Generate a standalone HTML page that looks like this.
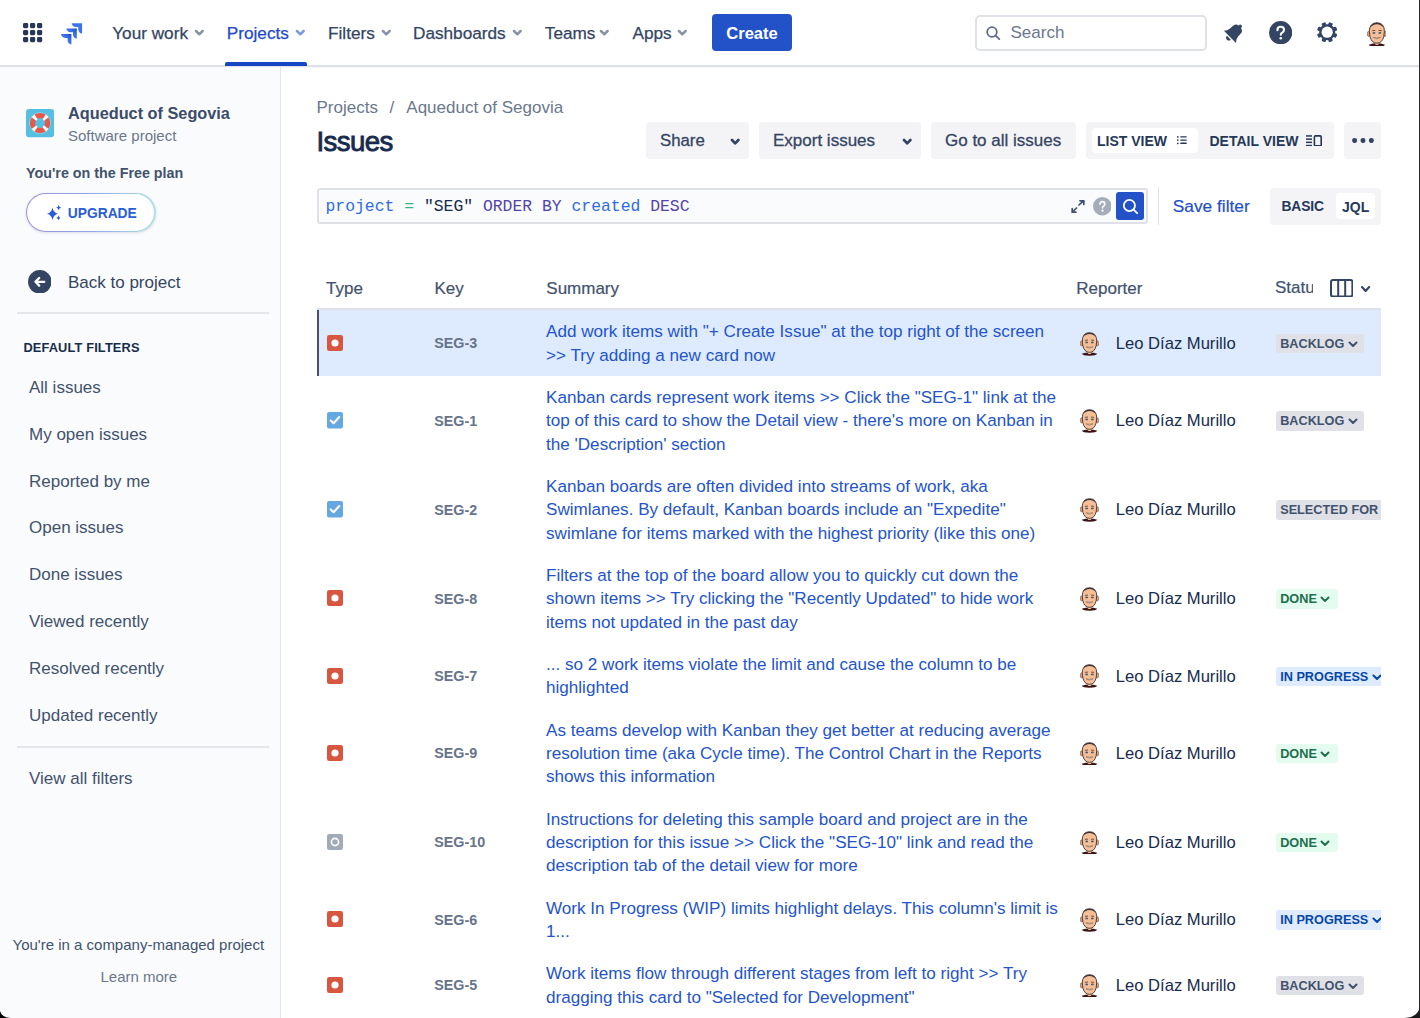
<!DOCTYPE html>
<html><head><meta charset="utf-8"><title>Issues - Jira</title>
<style>
html,body{margin:0;padding:0;}
body{width:1420px;height:1018px;position:relative;overflow:hidden;background:#fff;font-family:"Liberation Sans",sans-serif;}
.a{position:absolute;white-space:nowrap;}
.m{font-family:"Liberation Mono",monospace;}
.sum{position:absolute;left:546px;width:530px;font-size:17.1px;line-height:23.4px;color:#2354CC;white-space:nowrap;}
.loz{position:absolute;left:1275.5px;height:19.5px;border-radius:3px;font-weight:700;font-size:12.7px;line-height:21px;padding-left:4.7px;overflow:hidden;white-space:nowrap;}
</style></head><body>

<div class="a" style="left:0.00px;top:0.00px;width:1420.00px;height:65.40px;background:#fff;"></div>
<div class="a" style="left:0.00px;top:65.40px;width:1420.00px;height:1.40px;background:#DFE1E6;"></div>
<div class="a" style="left:0.00px;top:66.80px;width:1420.00px;height:1.70px;background:linear-gradient(#eef0f3,rgba(255,255,255,0));"></div>
<svg class="a" style="left:23.20px;top:23.00px;" width="19.5" height="19.5" viewBox="0 0 19.5 19.5"><rect x="0" y="0" width="5.2" height="5.2" rx="1.4" fill="#253858"/><rect x="0" y="7" width="5.2" height="5.2" rx="1.4" fill="#253858"/><rect x="0" y="14" width="5.2" height="5.2" rx="1.4" fill="#253858"/><rect x="7" y="0" width="5.2" height="5.2" rx="1.4" fill="#253858"/><rect x="7" y="7" width="5.2" height="5.2" rx="1.4" fill="#253858"/><rect x="7" y="14" width="5.2" height="5.2" rx="1.4" fill="#253858"/><rect x="14" y="0" width="5.2" height="5.2" rx="1.4" fill="#253858"/><rect x="14" y="7" width="5.2" height="5.2" rx="1.4" fill="#253858"/><rect x="14" y="14" width="5.2" height="5.2" rx="1.4" fill="#253858"/></svg>
<svg class="a" style="left:61.30px;top:22.80px;" width="21.4" height="21.8" viewBox="0 0 21.4 21.8"><defs><linearGradient id="jg" x1="1" y1="0" x2="0.3" y2="0.7"><stop offset="0" stop-color="#1848C2"/><stop offset="0.55" stop-color="#3C72E8"/></linearGradient></defs><path transform="translate(10.7 0.2)" d="M0 0 L10.4 0 L10.4 10.4 C8.2 10.1 6.6 8.5 6.6 6.2 L6.6 3.9 L4.2 3.9 C2 3.9 0.3 2.3 0 0 Z" fill="#3E74EA"/><path transform="translate(5.4 5.4)" d="M0 0 L10.4 0 L10.4 10.4 C8.2 10.1 6.6 8.5 6.6 6.2 L6.6 3.9 L4.2 3.9 C2 3.9 0.3 2.3 0 0 Z" fill="url(#jg)"/><path transform="translate(0 11.1)" d="M0 0 L10.4 0 L10.4 10.4 C8.2 10.1 6.6 8.5 6.6 6.2 L6.6 3.9 L4.2 3.9 C2 3.9 0.3 2.3 0 0 Z" fill="url(#jg)"/></svg>
<div class="a " style="left:112.20px;top:23.22px;font-size:17.2px;line-height:20.64px;color:#344563;font-weight:400;-webkit-text-stroke:0.25px #344563;">Your work</div>
<svg class="a" style="left:193.95px;top:28.95px;" width="10.6" height="7.3" viewBox="0 0 10.6 7.3"><path d="M2 2 L5.3 5.3 L8.6 2" fill="none" stroke="#8993A4" stroke-width="2.5" stroke-linecap="round" stroke-linejoin="round"/></svg>
<div class="a " style="left:226.80px;top:23.22px;font-size:17.2px;line-height:20.64px;color:#1D4ACB;font-weight:400;-webkit-text-stroke:0.25px #1D4ACB;">Projects</div>
<svg class="a" style="left:295.35px;top:28.95px;" width="10.6" height="7.3" viewBox="0 0 10.6 7.3"><path d="M2 2 L5.3 5.3 L8.6 2" fill="none" stroke="#7A9BE0" stroke-width="2.5" stroke-linecap="round" stroke-linejoin="round"/></svg>
<div class="a " style="left:328.00px;top:23.22px;font-size:17.2px;line-height:20.64px;color:#344563;font-weight:400;-webkit-text-stroke:0.25px #344563;">Filters</div>
<svg class="a" style="left:381.30px;top:28.95px;" width="10.6" height="7.3" viewBox="0 0 10.6 7.3"><path d="M2 2 L5.3 5.3 L8.6 2" fill="none" stroke="#8993A4" stroke-width="2.5" stroke-linecap="round" stroke-linejoin="round"/></svg>
<div class="a " style="left:413.00px;top:23.22px;font-size:17.2px;line-height:20.64px;color:#344563;font-weight:400;-webkit-text-stroke:0.25px #344563;">Dashboards</div>
<svg class="a" style="left:512.00px;top:28.95px;" width="10.6" height="7.3" viewBox="0 0 10.6 7.3"><path d="M2 2 L5.3 5.3 L8.6 2" fill="none" stroke="#8993A4" stroke-width="2.5" stroke-linecap="round" stroke-linejoin="round"/></svg>
<div class="a " style="left:544.80px;top:23.22px;font-size:17.2px;line-height:20.64px;color:#344563;font-weight:400;-webkit-text-stroke:0.25px #344563;">Teams</div>
<svg class="a" style="left:599.35px;top:28.95px;" width="10.6" height="7.3" viewBox="0 0 10.6 7.3"><path d="M2 2 L5.3 5.3 L8.6 2" fill="none" stroke="#8993A4" stroke-width="2.5" stroke-linecap="round" stroke-linejoin="round"/></svg>
<div class="a " style="left:632.50px;top:23.22px;font-size:17.2px;line-height:20.64px;color:#344563;font-weight:400;-webkit-text-stroke:0.25px #344563;">Apps</div>
<svg class="a" style="left:676.85px;top:28.95px;" width="10.6" height="7.3" viewBox="0 0 10.6 7.3"><path d="M2 2 L5.3 5.3 L8.6 2" fill="none" stroke="#8993A4" stroke-width="2.5" stroke-linecap="round" stroke-linejoin="round"/></svg>
<div class="a" style="left:225.00px;top:62.00px;width:82.40px;height:3.60px;background:#1546C4;border-radius:2px 2px 0 0;"></div>
<div class="a" style="left:712.30px;top:13.90px;width:80.00px;height:37.50px;background:#2352C8;border-radius:4px;"></div>
<div class="a " style="left:726.30px;top:23.88px;font-size:16.5px;line-height:19.8px;color:#fff;font-weight:700;">Create</div>
<div class="a" style="left:975.00px;top:15.00px;width:232.20px;height:35.60px;border:2px solid #DFE1E6;border-radius:5px;box-sizing:border-box;background:#fff;"></div>
<svg class="a" style="left:985.50px;top:26.30px;" width="15" height="14" viewBox="0 0 15 14"><circle cx="6" cy="6" r="4.8" fill="none" stroke="#5E6C84" stroke-width="1.8"/><path d="M9.6 9.6 L13.3 13.2" stroke="#5E6C84" stroke-width="1.8" stroke-linecap="round"/></svg>
<div class="a " style="left:1010.50px;top:23.41px;font-size:17px;line-height:20.4px;color:#6B778C;font-weight:400;">Search</div>
<svg class="a" style="left:1223.20px;top:20.90px;" width="22.6" height="22.6" viewBox="0 0 20 20"><g transform="rotate(45 10 10)"><path d="M2.3 15.6 Q4.9 13.6 5 10 L5 7.6 Q5 2.9 10 2.9 Q15 2.9 15 7.6 L15 10 Q15.1 13.6 17.7 15.6 Z" fill="#344563"/><rect x="8.6" y="1.2" width="2.8" height="2.4" rx="0.8" fill="#344563"/><path d="M7.6 16.8 A2.4 2.4 0 0 0 12.4 16.8 Z" fill="#344563"/></g></svg>
<svg class="a" style="left:1268.90px;top:21.00px;" width="23.3" height="23.3" viewBox="0 0 23.3 23.3"><circle cx="11.65" cy="11.65" r="11.65" fill="#344563"/><path d="M8.4 9.2 Q8.4 5.7 11.7 5.7 Q15 5.7 15 8.7 Q15 10.6 13.2 11.6 Q11.8 12.3 11.8 13.8" fill="none" stroke="#fff" stroke-width="2.1" stroke-linecap="round"/><circle cx="11.8" cy="17.3" r="1.3" fill="#fff"/></svg>
<svg class="a" style="left:1316.90px;top:22.20px;" width="20.4" height="20.4" viewBox="0 0 20.4 20.4"><circle cx="10.2" cy="10.2" r="8" fill="#344563"/><rect x="8.1" y="0" width="4.2" height="5" rx="1.1" fill="#344563" transform="rotate(22.5 10.2 10.2)"/><rect x="8.1" y="0" width="4.2" height="5" rx="1.1" fill="#344563" transform="rotate(67.5 10.2 10.2)"/><rect x="8.1" y="0" width="4.2" height="5" rx="1.1" fill="#344563" transform="rotate(112.5 10.2 10.2)"/><rect x="8.1" y="0" width="4.2" height="5" rx="1.1" fill="#344563" transform="rotate(157.5 10.2 10.2)"/><rect x="8.1" y="0" width="4.2" height="5" rx="1.1" fill="#344563" transform="rotate(202.5 10.2 10.2)"/><rect x="8.1" y="0" width="4.2" height="5" rx="1.1" fill="#344563" transform="rotate(247.5 10.2 10.2)"/><rect x="8.1" y="0" width="4.2" height="5" rx="1.1" fill="#344563" transform="rotate(292.5 10.2 10.2)"/><rect x="8.1" y="0" width="4.2" height="5" rx="1.1" fill="#344563" transform="rotate(337.5 10.2 10.2)"/><circle cx="10.2" cy="10.2" r="5.6" fill="#fff"/></svg>
<svg class="a" style="left:1366.50px;top:21.60px;" width="19.8" height="24.75" viewBox="0 0 20 25"><path d="M1.8 23 Q10 20 18.2 23 Q17 25 10 25 Q3 25 1.8 23 Z" fill="#3b1216"/><path d="M8.2 19.5 L11.8 19.5 L11.8 22.8 Q10 23.6 8.2 22.8 Z" fill="#f1bf98"/><ellipse cx="1.9" cy="12" rx="1.7" ry="2.7" fill="#d9a27e" stroke="#5a3b2e" stroke-width="0.5"/><ellipse cx="18.1" cy="12" rx="1.7" ry="2.7" fill="#d9a27e" stroke="#5a3b2e" stroke-width="0.5"/><path d="M2.4 9.5 Q2.4 0.8 10 0.8 Q17.6 0.8 17.6 9.5 L17 14.5 Q15.4 21.4 10 21.4 Q4.6 21.4 3 14.5 Z" fill="#F4BF96" stroke="#3a2a2a" stroke-width="0.9"/><path d="M3.5 5.5 Q5 0.8 10 0.8 Q15 0.8 16.5 5.5 Q14.5 2.4 10 2.2 Q5.5 2.4 3.5 5.5 Z" fill="#3a3036"/><path d="M5.2 8.8 L8.4 8.5 M11.6 8.5 L14.8 8.8" stroke="#6a4a3a" stroke-width="1"/><ellipse cx="7" cy="11" rx="1.5" ry="0.95" fill="#4a5a6a"/><ellipse cx="13" cy="11" rx="1.5" ry="0.95" fill="#4a5a6a"/><path d="M6.4 15.6 Q10 18.4 13.6 15.6 Q10 16.6 6.4 15.6 Z" fill="#e8e8e8" stroke="#6a4a3a" stroke-width="0.5"/></svg>
<div class="a" style="left:0.00px;top:67.00px;width:280.00px;height:951.00px;background:#FAFBFC;"></div>
<div class="a" style="left:280.00px;top:67.00px;width:1.20px;height:951.00px;background:#E4E6EA;"></div>
<svg class="a" style="left:25.90px;top:109.40px;" width="28.2" height="28.2" viewBox="0 0 28.2 28.2"><rect width="28.2" height="28.2" rx="3" fill="#56BFE1"/><circle cx="14.1" cy="14.1" r="10.4" fill="none" stroke="#9fdcef" stroke-width="0.8"/><circle cx="14.1" cy="14.1" r="7.6" fill="none" stroke="#E8584A" stroke-width="5.2"/><path transform="rotate(45 14.1 14.1)" d="M12.2 4 L16 4 L15.2 9.6 L13 9.6 Z" fill="#fff"/><path transform="rotate(135 14.1 14.1)" d="M12.2 4 L16 4 L15.2 9.6 L13 9.6 Z" fill="#fff"/><path transform="rotate(225 14.1 14.1)" d="M12.2 4 L16 4 L15.2 9.6 L13 9.6 Z" fill="#fff"/><path transform="rotate(315 14.1 14.1)" d="M12.2 4 L16 4 L15.2 9.6 L13 9.6 Z" fill="#fff"/></svg>
<div class="a " style="left:68.00px;top:104.27px;font-size:16.3px;line-height:19.56px;color:#3B4B69;font-weight:700;">Aqueduct of Segovia</div>
<div class="a " style="left:68.00px;top:127.40px;font-size:15px;line-height:18.0px;color:#6B778C;font-weight:400;">Software project</div>
<div class="a " style="left:26.00px;top:165.47px;font-size:14.3px;line-height:17.16px;color:#42526E;font-weight:700;">You're on the Free plan</div>
<div class="a" style="left:25.90px;top:193.20px;width:129.70px;height:38.80px;border-radius:20px;padding:1.2px;box-sizing:border-box;background:linear-gradient(90deg,#9A8EE0,#8FAEEA 55%,#B0E0E6);box-shadow:0 1px 3px rgba(9,30,66,0.13);"><div style="width:100%;height:100%;background:#fff;border-radius:19px;"></div></div>
<svg class="a" style="left:45.50px;top:204.50px;" width="16.5" height="15.5" viewBox="0 0 16.5 15.5"><path d="M6.5 2.5 Q7.3 7.6 12 8.8 Q7.3 10 6.5 15 Q5.7 10 1 8.8 Q5.7 7.6 6.5 2.5 Z" fill="#2A5DD6"/><path d="M12.7 0 Q13 2.3 15.2 2.7 Q13 3.1 12.7 5.3 Q12.4 3.1 10.2 2.7 Q12.4 2.3 12.7 0Z" fill="#2A5DD6"/><path d="M12.5 10.5 Q12.8 12.5 14.6 12.9 Q12.8 13.3 12.5 15.3 Q12.2 13.3 10.4 12.9 Q12.2 12.5 12.5 10.5Z" fill="#2A5DD6"/></svg>
<div class="a " style="left:67.80px;top:205.74px;font-size:13.8px;line-height:16.56px;color:#2A5DD6;font-weight:700;">UPGRADE</div>
<svg class="a" style="left:27.80px;top:269.80px;" width="23.6" height="23.6" viewBox="0 0 23.6 23.6"><circle cx="11.8" cy="11.8" r="11.8" fill="#344563"/><path d="M16.3 11.8 L7.6 11.8 M11.2 8 L7.4 11.8 L11.2 15.6" fill="none" stroke="#fff" stroke-width="2.3" stroke-linecap="round" stroke-linejoin="round"/></svg>
<div class="a " style="left:68.00px;top:272.71px;font-size:17px;line-height:20.4px;color:#344563;font-weight:400;">Back to project</div>
<div class="a" style="left:16.50px;top:312.30px;width:252.80px;height:2.00px;background:#E4E6EA;"></div>
<div class="a " style="left:23.40px;top:340.18px;font-size:12.8px;line-height:15.36px;color:#172B4D;font-weight:700;letter-spacing:0.15px;">DEFAULT FILTERS</div>
<div class="a " style="left:29.00px;top:377.81px;font-size:17px;line-height:20.4px;color:#42526E;font-weight:400;">All issues</div>
<div class="a " style="left:29.00px;top:425.01px;font-size:17px;line-height:20.4px;color:#42526E;font-weight:400;">My open issues</div>
<div class="a " style="left:29.00px;top:471.71px;font-size:17px;line-height:20.4px;color:#42526E;font-weight:400;">Reported by me</div>
<div class="a " style="left:29.00px;top:518.11px;font-size:17px;line-height:20.4px;color:#42526E;font-weight:400;">Open issues</div>
<div class="a " style="left:29.00px;top:565.41px;font-size:17px;line-height:20.4px;color:#42526E;font-weight:400;">Done issues</div>
<div class="a " style="left:29.00px;top:611.91px;font-size:17px;line-height:20.4px;color:#42526E;font-weight:400;">Viewed recently</div>
<div class="a " style="left:29.00px;top:659.11px;font-size:17px;line-height:20.4px;color:#42526E;font-weight:400;">Resolved recently</div>
<div class="a " style="left:29.00px;top:706.21px;font-size:17px;line-height:20.4px;color:#42526E;font-weight:400;">Updated recently</div>
<div class="a" style="left:16.50px;top:746.00px;width:252.80px;height:2.00px;background:#E4E6EA;"></div>
<div class="a " style="left:29.00px;top:768.71px;font-size:17px;line-height:20.4px;color:#42526E;font-weight:400;">View all filters</div>
<div class="a " style="left:12.50px;top:935.90px;font-size:15px;line-height:18.0px;color:#42526E;font-weight:400;">You're in a company-managed project</div>
<div class="a " style="left:100.50px;top:967.60px;font-size:15px;line-height:18.0px;color:#6B778C;font-weight:400;">Learn more</div>
<div class="a " style="left:316.50px;top:98.41px;font-size:17px;line-height:20.4px;color:#6B778C;font-weight:400;">Projects</div>
<div class="a " style="left:389.50px;top:98.41px;font-size:17px;line-height:20.4px;color:#6B778C;font-weight:400;">/</div>
<div class="a " style="left:406.30px;top:98.41px;font-size:17px;line-height:20.4px;color:#6B778C;font-weight:400;">Aqueduct of Segovia</div>
<div class="a " style="left:316.40px;top:125.28px;font-size:27.6px;line-height:33.12px;color:#172B4D;font-weight:400;letter-spacing:-0.55px;-webkit-text-stroke:0.85px #172B4D;">Issues</div>
<div class="a" style="left:646.30px;top:122.00px;width:102.50px;height:36.70px;background:#F4F4F6;border-radius:4px;"></div>
<div class="a " style="left:660.00px;top:131.00px;font-size:16.8px;line-height:20.16px;color:#344563;font-weight:400;-webkit-text-stroke:0.3px #344563;">Share</div>
<svg class="a" style="left:730.20px;top:137.60px;" width="10.4" height="7.4" viewBox="0 0 10.4 7.4"><path d="M2 2 L5.2 5.4 L8.4 2" fill="none" stroke="#344563" stroke-width="2.7" stroke-linecap="round" stroke-linejoin="round"/></svg>
<div class="a" style="left:759.00px;top:122.00px;width:162.00px;height:36.70px;background:#F4F4F6;border-radius:4px;"></div>
<div class="a " style="left:773.00px;top:130.81px;font-size:17px;line-height:20.4px;color:#344563;font-weight:400;-webkit-text-stroke:0.3px #344563;">Export issues</div>
<svg class="a" style="left:902.30px;top:137.60px;" width="10.4" height="7.4" viewBox="0 0 10.4 7.4"><path d="M2 2 L5.2 5.4 L8.4 2" fill="none" stroke="#344563" stroke-width="2.7" stroke-linecap="round" stroke-linejoin="round"/></svg>
<div class="a" style="left:931.20px;top:122.00px;width:144.80px;height:36.70px;background:#F4F4F6;border-radius:4px;"></div>
<div class="a " style="left:945.00px;top:130.81px;font-size:17px;line-height:20.4px;color:#344563;font-weight:400;-webkit-text-stroke:0.3px #344563;">Go to all issues</div>
<div class="a" style="left:1085.90px;top:121.90px;width:248.30px;height:36.90px;background:#F4F4F6;border-radius:4px;"></div>
<div class="a" style="left:1091.60px;top:127.70px;width:106.20px;height:25.80px;background:#fff;border-radius:4px;"></div>
<div class="a " style="left:1097.00px;top:132.95px;font-size:14px;line-height:16.8px;color:#253858;font-weight:700;">LIST VIEW</div>
<svg class="a" style="left:1177.30px;top:136.40px;" width="10" height="8.2" viewBox="0 0 10 8.2"><g fill="#253858"><circle cx="0.8" cy="0.9" r="0.85"/><circle cx="0.8" cy="4.1" r="0.85"/><circle cx="0.8" cy="7.3" r="0.85"/><rect x="3.2" y="0.2" width="6.6" height="1.4" rx="0.5"/><rect x="3.2" y="3.4" width="6.6" height="1.4" rx="0.5"/><rect x="3.2" y="6.6" width="6.6" height="1.4" rx="0.5"/></g></svg>
<div class="a " style="left:1209.50px;top:132.75px;font-size:14px;line-height:16.8px;color:#253858;font-weight:700;">DETAIL VIEW</div>
<svg class="a" style="left:1305.50px;top:134.80px;" width="16" height="11.5" viewBox="0 0 16 11.5"><g fill="#253858"><rect x="0" y="0.2" width="6" height="1.5"/><rect x="0" y="3.4" width="6" height="1.5"/><rect x="0" y="6.6" width="6" height="1.5"/><rect x="0" y="9.8" width="6" height="1.5"/></g><rect x="8.4" y="0.9" width="6.8" height="9.8" rx="1" fill="none" stroke="#253858" stroke-width="1.6"/></svg>
<div class="a" style="left:1343.90px;top:122.00px;width:37.20px;height:36.80px;background:#F4F4F6;border-radius:4px;"></div>
<svg class="a" style="left:1351.50px;top:138.00px;" width="22" height="5.2" viewBox="0 0 22 5.2"><g fill="#344563"><circle cx="2.6" cy="2.6" r="2.5"/><circle cx="11" cy="2.6" r="2.5"/><circle cx="19.4" cy="2.6" r="2.5"/></g></svg>
<div class="a" style="left:316.80px;top:188.10px;width:831.50px;height:36.10px;border:2px solid #DFE1E6;border-radius:3px;box-sizing:border-box;background:#FAFBFC;"></div>
<div class="a m" style="left:325.50px;top:197.28px;font-size:16.4px;line-height:19.68px;color:#172B4D;font-weight:400;"><span style="color:#2E6BE6">project</span> <span style="color:#36B37E">=</span> <span style="color:#172B4D">"SEG"</span> <span style="color:#5243AA">ORDER</span> <span style="color:#5243AA">BY</span> <span style="color:#2E6BE6">created</span> <span style="color:#5243AA">DESC</span></div>
<svg class="a" style="left:1071.30px;top:199.50px;" width="14" height="13" viewBox="0 0 14 13"><g fill="none" stroke="#42526E" stroke-width="1.7" stroke-linecap="round"><path d="M8 5 L12.5 0.8 M9 0.8 L12.8 0.8 L12.8 4.4"/><path d="M5.5 8 L1.2 12.2 M1.2 8.5 L1.2 12.2 L4.9 12.2"/></g></svg>
<svg class="a" style="left:1092.50px;top:197.00px;" width="18.6" height="18.6" viewBox="0 0 18.6 18.6"><circle cx="9.3" cy="9.3" r="9.3" fill="#A5ADBA"/><path d="M7 7.3 Q7 4.6 9.4 4.6 Q11.8 4.6 11.8 7 Q11.8 8.4 10.5 9.1 Q9.5 9.7 9.5 11" fill="none" stroke="#fff" stroke-width="1.6" stroke-linecap="round"/><circle cx="9.5" cy="13.7" r="1.15" fill="#fff"/></svg>
<div class="a" style="left:1116.20px;top:192.00px;width:27.50px;height:28.00px;background:#2352C8;border-radius:3px;"></div>
<svg class="a" style="left:1121.50px;top:197.80px;" width="17" height="17" viewBox="0 0 17 17"><circle cx="7.4" cy="7.5" r="5.6" fill="none" stroke="#fff" stroke-width="1.8"/><path d="M11.5 11.6 L15.2 15.1" stroke="#fff" stroke-width="1.8" stroke-linecap="round"/></svg>
<div class="a" style="left:1158.30px;top:187.40px;width:1.20px;height:37.20px;background:#DFE1E6;"></div>
<div class="a " style="left:1172.80px;top:196.43px;font-size:17.3px;line-height:20.76px;color:#1D4FCC;font-weight:400;-webkit-text-stroke:0.2px #1D4FCC;">Save filter</div>
<div class="a" style="left:1269.60px;top:187.70px;width:111.60px;height:36.90px;background:#F4F4F6;border-radius:4px;"></div>
<div class="a " style="left:1281.50px;top:199.14px;font-size:13.8px;line-height:16.56px;color:#253858;font-weight:700;letter-spacing:-0.1px;">BASIC</div>
<div class="a" style="left:1336.00px;top:193.20px;width:38.90px;height:25.60px;background:#fff;border-radius:4px;"></div>
<div class="a " style="left:1342.00px;top:198.95px;font-size:14px;line-height:16.8px;color:#253858;font-weight:700;">JQL</div>
<div class="a " style="left:326.00px;top:278.91px;font-size:17px;line-height:20.4px;color:#42526E;font-weight:400;-webkit-text-stroke:0.2px #42526E;">Type</div>
<div class="a " style="left:434.50px;top:278.91px;font-size:17px;line-height:20.4px;color:#42526E;font-weight:400;-webkit-text-stroke:0.2px #42526E;">Key</div>
<div class="a " style="left:546.30px;top:278.91px;font-size:17px;line-height:20.4px;color:#42526E;font-weight:400;-webkit-text-stroke:0.2px #42526E;">Summary</div>
<div class="a " style="left:1076.30px;top:278.91px;font-size:17px;line-height:20.4px;color:#42526E;font-weight:400;-webkit-text-stroke:0.2px #42526E;">Reporter</div>
<div class="a" style="left:1275px;top:277.4px;width:38px;height:22px;overflow:hidden;"><div class="a" style="left:0;top:0;font-size:17px;line-height:22px;color:#42526E;-webkit-text-stroke:0.2px #42526E;">Status</div></div>
<svg class="a" style="left:1329.80px;top:278.90px;" width="23.4" height="18.6" viewBox="0 0 23.4 18.6"><rect x="1" y="1" width="21.4" height="16.6" rx="2" fill="none" stroke="#344563" stroke-width="2"/><path d="M8.2 1 L8.2 17.6 M15.2 1 L15.2 17.6" stroke="#344563" stroke-width="2"/></svg>
<svg class="a" style="left:1359.60px;top:284.60px;" width="11.2" height="8" viewBox="0 0 11.2 8"><path d="M2 2 L5.6 6 L9.2 2" fill="none" stroke="#344563" stroke-width="2.1" stroke-linecap="round" stroke-linejoin="round"/></svg>
<div class="a" style="left:316.80px;top:308.00px;width:1064.40px;height:2.30px;background:#DFE1E6;"></div>
<div class="a" style="left:316.50px;top:310.30px;width:1064.70px;height:65.60px;background:#DEEBFF;"></div>
<div class="a" style="left:316.50px;top:310.30px;width:2.50px;height:65.60px;background:#42526E;"></div>
<svg class="a" style="left:327.10px;top:335.00px;" width="16" height="16" viewBox="0 0 16 16"><rect width="16" height="16" rx="2.2" fill="#D8553F"/><circle cx="8" cy="8" r="3.6" fill="#fff"/></svg>
<div class="a " style="left:434.30px;top:335.47px;font-size:14.3px;line-height:17.16px;color:#66738A;font-weight:700;">SEG-3</div>
<div class="sum" style="top:320.30px;">Add work items with "+ Create Issue" at the top right of the screen<br>&gt;&gt; Try adding a new card now</div>
<svg class="a" style="left:1080.20px;top:331.80px;" width="19.0" height="23.75" viewBox="0 0 20 25"><path d="M1.8 23 Q10 20 18.2 23 Q17 25 10 25 Q3 25 1.8 23 Z" fill="#3b1216"/><path d="M8.2 19.5 L11.8 19.5 L11.8 22.8 Q10 23.6 8.2 22.8 Z" fill="#f1bf98"/><ellipse cx="1.9" cy="12" rx="1.7" ry="2.7" fill="#d9a27e" stroke="#5a3b2e" stroke-width="0.5"/><ellipse cx="18.1" cy="12" rx="1.7" ry="2.7" fill="#d9a27e" stroke="#5a3b2e" stroke-width="0.5"/><path d="M2.4 9.5 Q2.4 0.8 10 0.8 Q17.6 0.8 17.6 9.5 L17 14.5 Q15.4 21.4 10 21.4 Q4.6 21.4 3 14.5 Z" fill="#F4BF96" stroke="#3a2a2a" stroke-width="0.9"/><path d="M3.5 5.5 Q5 0.8 10 0.8 Q15 0.8 16.5 5.5 Q14.5 2.4 10 2.2 Q5.5 2.4 3.5 5.5 Z" fill="#3a3036"/><path d="M5.2 8.8 L8.4 8.5 M11.6 8.5 L14.8 8.8" stroke="#6a4a3a" stroke-width="1"/><ellipse cx="7" cy="11" rx="1.5" ry="0.95" fill="#4a5a6a"/><ellipse cx="13" cy="11" rx="1.5" ry="0.95" fill="#4a5a6a"/><path d="M6.4 15.6 Q10 18.4 13.6 15.6 Q10 16.6 6.4 15.6 Z" fill="#e8e8e8" stroke="#6a4a3a" stroke-width="0.5"/></svg>
<div class="a " style="left:1115.80px;top:334.09px;font-size:16.6px;line-height:19.92px;color:#172B4D;font-weight:400;">Leo Díaz Murillo</div>
<div class="loz" style="top:333.90px;width:84px;background:#DFE1E6;color:#42526E;">BACKLOG<svg width="10" height="7" viewBox="0 0 10 7" style="margin-left:3.5px;vertical-align:0px"><path d="M1.5 1.5 L5 5 L8.5 1.5" fill="none" stroke="currentColor" stroke-width="2" stroke-linecap="round" stroke-linejoin="round"/></svg></div>
<svg class="a" style="left:327.10px;top:412.30px;" width="16" height="16.4" viewBox="0 0 16 16.4"><rect width="16" height="16.4" rx="2.2" fill="#64A8E2"/><path d="M3.7 8.4 L6.6 11.2 L12.3 5" fill="none" stroke="#fff" stroke-width="2.1" stroke-linecap="round" stroke-linejoin="round"/></svg>
<div class="a " style="left:434.30px;top:412.77px;font-size:14.3px;line-height:17.16px;color:#66738A;font-weight:700;">SEG-1</div>
<div class="sum" style="top:385.90px;">Kanban cards represent work items &gt;&gt; Click the "SEG-1" link at the<br>top of this card to show the Detail view - there's more on Kanban in<br>the 'Description' section</div>
<svg class="a" style="left:1080.20px;top:409.10px;" width="19.0" height="23.75" viewBox="0 0 20 25"><path d="M1.8 23 Q10 20 18.2 23 Q17 25 10 25 Q3 25 1.8 23 Z" fill="#3b1216"/><path d="M8.2 19.5 L11.8 19.5 L11.8 22.8 Q10 23.6 8.2 22.8 Z" fill="#f1bf98"/><ellipse cx="1.9" cy="12" rx="1.7" ry="2.7" fill="#d9a27e" stroke="#5a3b2e" stroke-width="0.5"/><ellipse cx="18.1" cy="12" rx="1.7" ry="2.7" fill="#d9a27e" stroke="#5a3b2e" stroke-width="0.5"/><path d="M2.4 9.5 Q2.4 0.8 10 0.8 Q17.6 0.8 17.6 9.5 L17 14.5 Q15.4 21.4 10 21.4 Q4.6 21.4 3 14.5 Z" fill="#F4BF96" stroke="#3a2a2a" stroke-width="0.9"/><path d="M3.5 5.5 Q5 0.8 10 0.8 Q15 0.8 16.5 5.5 Q14.5 2.4 10 2.2 Q5.5 2.4 3.5 5.5 Z" fill="#3a3036"/><path d="M5.2 8.8 L8.4 8.5 M11.6 8.5 L14.8 8.8" stroke="#6a4a3a" stroke-width="1"/><ellipse cx="7" cy="11" rx="1.5" ry="0.95" fill="#4a5a6a"/><ellipse cx="13" cy="11" rx="1.5" ry="0.95" fill="#4a5a6a"/><path d="M6.4 15.6 Q10 18.4 13.6 15.6 Q10 16.6 6.4 15.6 Z" fill="#e8e8e8" stroke="#6a4a3a" stroke-width="0.5"/></svg>
<div class="a " style="left:1115.80px;top:411.39px;font-size:16.6px;line-height:19.92px;color:#172B4D;font-weight:400;">Leo Díaz Murillo</div>
<div class="loz" style="top:411.20px;width:84px;background:#DFE1E6;color:#42526E;">BACKLOG<svg width="10" height="7" viewBox="0 0 10 7" style="margin-left:3.5px;vertical-align:0px"><path d="M1.5 1.5 L5 5 L8.5 1.5" fill="none" stroke="currentColor" stroke-width="2" stroke-linecap="round" stroke-linejoin="round"/></svg></div>
<svg class="a" style="left:327.10px;top:501.30px;" width="16" height="16.4" viewBox="0 0 16 16.4"><rect width="16" height="16.4" rx="2.2" fill="#64A8E2"/><path d="M3.7 8.4 L6.6 11.2 L12.3 5" fill="none" stroke="#fff" stroke-width="2.1" stroke-linecap="round" stroke-linejoin="round"/></svg>
<div class="a " style="left:434.30px;top:501.77px;font-size:14.3px;line-height:17.16px;color:#66738A;font-weight:700;">SEG-2</div>
<div class="sum" style="top:474.90px;">Kanban boards are often divided into streams of work, aka<br>Swimlanes. By default, Kanban boards include an "Expedite"<br>swimlane for items marked with the highest priority (like this one)</div>
<svg class="a" style="left:1080.20px;top:498.10px;" width="19.0" height="23.75" viewBox="0 0 20 25"><path d="M1.8 23 Q10 20 18.2 23 Q17 25 10 25 Q3 25 1.8 23 Z" fill="#3b1216"/><path d="M8.2 19.5 L11.8 19.5 L11.8 22.8 Q10 23.6 8.2 22.8 Z" fill="#f1bf98"/><ellipse cx="1.9" cy="12" rx="1.7" ry="2.7" fill="#d9a27e" stroke="#5a3b2e" stroke-width="0.5"/><ellipse cx="18.1" cy="12" rx="1.7" ry="2.7" fill="#d9a27e" stroke="#5a3b2e" stroke-width="0.5"/><path d="M2.4 9.5 Q2.4 0.8 10 0.8 Q17.6 0.8 17.6 9.5 L17 14.5 Q15.4 21.4 10 21.4 Q4.6 21.4 3 14.5 Z" fill="#F4BF96" stroke="#3a2a2a" stroke-width="0.9"/><path d="M3.5 5.5 Q5 0.8 10 0.8 Q15 0.8 16.5 5.5 Q14.5 2.4 10 2.2 Q5.5 2.4 3.5 5.5 Z" fill="#3a3036"/><path d="M5.2 8.8 L8.4 8.5 M11.6 8.5 L14.8 8.8" stroke="#6a4a3a" stroke-width="1"/><ellipse cx="7" cy="11" rx="1.5" ry="0.95" fill="#4a5a6a"/><ellipse cx="13" cy="11" rx="1.5" ry="0.95" fill="#4a5a6a"/><path d="M6.4 15.6 Q10 18.4 13.6 15.6 Q10 16.6 6.4 15.6 Z" fill="#e8e8e8" stroke="#6a4a3a" stroke-width="0.5"/></svg>
<div class="a " style="left:1115.80px;top:500.39px;font-size:16.6px;line-height:19.92px;color:#172B4D;font-weight:400;">Leo Díaz Murillo</div>
<div class="loz" style="top:500.20px;width:101px;background:#DFE1E6;color:#42526E;border-radius:3px 0 0 3px;">SELECTED FOR DEVELOPMENT</div>
<svg class="a" style="left:327.10px;top:590.30px;" width="16" height="16" viewBox="0 0 16 16"><rect width="16" height="16" rx="2.2" fill="#D8553F"/><circle cx="8" cy="8" r="3.6" fill="#fff"/></svg>
<div class="a " style="left:434.30px;top:590.77px;font-size:14.3px;line-height:17.16px;color:#66738A;font-weight:700;">SEG-8</div>
<div class="sum" style="top:563.90px;">Filters at the top of the board allow you to quickly cut down the<br>shown items &gt;&gt; Try clicking the "Recently Updated" to hide work<br>items not updated in the past day</div>
<svg class="a" style="left:1080.20px;top:587.10px;" width="19.0" height="23.75" viewBox="0 0 20 25"><path d="M1.8 23 Q10 20 18.2 23 Q17 25 10 25 Q3 25 1.8 23 Z" fill="#3b1216"/><path d="M8.2 19.5 L11.8 19.5 L11.8 22.8 Q10 23.6 8.2 22.8 Z" fill="#f1bf98"/><ellipse cx="1.9" cy="12" rx="1.7" ry="2.7" fill="#d9a27e" stroke="#5a3b2e" stroke-width="0.5"/><ellipse cx="18.1" cy="12" rx="1.7" ry="2.7" fill="#d9a27e" stroke="#5a3b2e" stroke-width="0.5"/><path d="M2.4 9.5 Q2.4 0.8 10 0.8 Q17.6 0.8 17.6 9.5 L17 14.5 Q15.4 21.4 10 21.4 Q4.6 21.4 3 14.5 Z" fill="#F4BF96" stroke="#3a2a2a" stroke-width="0.9"/><path d="M3.5 5.5 Q5 0.8 10 0.8 Q15 0.8 16.5 5.5 Q14.5 2.4 10 2.2 Q5.5 2.4 3.5 5.5 Z" fill="#3a3036"/><path d="M5.2 8.8 L8.4 8.5 M11.6 8.5 L14.8 8.8" stroke="#6a4a3a" stroke-width="1"/><ellipse cx="7" cy="11" rx="1.5" ry="0.95" fill="#4a5a6a"/><ellipse cx="13" cy="11" rx="1.5" ry="0.95" fill="#4a5a6a"/><path d="M6.4 15.6 Q10 18.4 13.6 15.6 Q10 16.6 6.4 15.6 Z" fill="#e8e8e8" stroke="#6a4a3a" stroke-width="0.5"/></svg>
<div class="a " style="left:1115.80px;top:589.39px;font-size:16.6px;line-height:19.92px;color:#172B4D;font-weight:400;">Leo Díaz Murillo</div>
<div class="loz" style="top:589.20px;width:58px;background:#E3FCEF;color:#216E4E;">DONE<svg width="10" height="7" viewBox="0 0 10 7" style="margin-left:3.5px;vertical-align:0px"><path d="M1.5 1.5 L5 5 L8.5 1.5" fill="none" stroke="currentColor" stroke-width="2" stroke-linecap="round" stroke-linejoin="round"/></svg></div>
<svg class="a" style="left:327.10px;top:667.60px;" width="16" height="16" viewBox="0 0 16 16"><rect width="16" height="16" rx="2.2" fill="#D8553F"/><circle cx="8" cy="8" r="3.6" fill="#fff"/></svg>
<div class="a " style="left:434.30px;top:668.07px;font-size:14.3px;line-height:17.16px;color:#66738A;font-weight:700;">SEG-7</div>
<div class="sum" style="top:652.90px;">... so 2 work items violate the limit and cause the column to be<br>highlighted</div>
<svg class="a" style="left:1080.20px;top:664.40px;" width="19.0" height="23.75" viewBox="0 0 20 25"><path d="M1.8 23 Q10 20 18.2 23 Q17 25 10 25 Q3 25 1.8 23 Z" fill="#3b1216"/><path d="M8.2 19.5 L11.8 19.5 L11.8 22.8 Q10 23.6 8.2 22.8 Z" fill="#f1bf98"/><ellipse cx="1.9" cy="12" rx="1.7" ry="2.7" fill="#d9a27e" stroke="#5a3b2e" stroke-width="0.5"/><ellipse cx="18.1" cy="12" rx="1.7" ry="2.7" fill="#d9a27e" stroke="#5a3b2e" stroke-width="0.5"/><path d="M2.4 9.5 Q2.4 0.8 10 0.8 Q17.6 0.8 17.6 9.5 L17 14.5 Q15.4 21.4 10 21.4 Q4.6 21.4 3 14.5 Z" fill="#F4BF96" stroke="#3a2a2a" stroke-width="0.9"/><path d="M3.5 5.5 Q5 0.8 10 0.8 Q15 0.8 16.5 5.5 Q14.5 2.4 10 2.2 Q5.5 2.4 3.5 5.5 Z" fill="#3a3036"/><path d="M5.2 8.8 L8.4 8.5 M11.6 8.5 L14.8 8.8" stroke="#6a4a3a" stroke-width="1"/><ellipse cx="7" cy="11" rx="1.5" ry="0.95" fill="#4a5a6a"/><ellipse cx="13" cy="11" rx="1.5" ry="0.95" fill="#4a5a6a"/><path d="M6.4 15.6 Q10 18.4 13.6 15.6 Q10 16.6 6.4 15.6 Z" fill="#e8e8e8" stroke="#6a4a3a" stroke-width="0.5"/></svg>
<div class="a " style="left:1115.80px;top:666.69px;font-size:16.6px;line-height:19.92px;color:#172B4D;font-weight:400;">Leo Díaz Murillo</div>
<div class="loz" style="top:666.50px;width:101px;background:#DEEBFF;color:#0747A6;border-radius:3px 0 0 3px;">IN PROGRESS<svg width="10" height="7" viewBox="0 0 10 7" style="margin-left:3.5px;vertical-align:0px"><path d="M1.5 1.5 L5 5 L8.5 1.5" fill="none" stroke="currentColor" stroke-width="2" stroke-linecap="round" stroke-linejoin="round"/></svg></div>
<svg class="a" style="left:327.10px;top:744.90px;" width="16" height="16" viewBox="0 0 16 16"><rect width="16" height="16" rx="2.2" fill="#D8553F"/><circle cx="8" cy="8" r="3.6" fill="#fff"/></svg>
<div class="a " style="left:434.30px;top:745.37px;font-size:14.3px;line-height:17.16px;color:#66738A;font-weight:700;">SEG-9</div>
<div class="sum" style="top:718.50px;">As teams develop with Kanban they get better at reducing average<br>resolution time (aka Cycle time). The Control Chart in the Reports<br>shows this information</div>
<svg class="a" style="left:1080.20px;top:741.70px;" width="19.0" height="23.75" viewBox="0 0 20 25"><path d="M1.8 23 Q10 20 18.2 23 Q17 25 10 25 Q3 25 1.8 23 Z" fill="#3b1216"/><path d="M8.2 19.5 L11.8 19.5 L11.8 22.8 Q10 23.6 8.2 22.8 Z" fill="#f1bf98"/><ellipse cx="1.9" cy="12" rx="1.7" ry="2.7" fill="#d9a27e" stroke="#5a3b2e" stroke-width="0.5"/><ellipse cx="18.1" cy="12" rx="1.7" ry="2.7" fill="#d9a27e" stroke="#5a3b2e" stroke-width="0.5"/><path d="M2.4 9.5 Q2.4 0.8 10 0.8 Q17.6 0.8 17.6 9.5 L17 14.5 Q15.4 21.4 10 21.4 Q4.6 21.4 3 14.5 Z" fill="#F4BF96" stroke="#3a2a2a" stroke-width="0.9"/><path d="M3.5 5.5 Q5 0.8 10 0.8 Q15 0.8 16.5 5.5 Q14.5 2.4 10 2.2 Q5.5 2.4 3.5 5.5 Z" fill="#3a3036"/><path d="M5.2 8.8 L8.4 8.5 M11.6 8.5 L14.8 8.8" stroke="#6a4a3a" stroke-width="1"/><ellipse cx="7" cy="11" rx="1.5" ry="0.95" fill="#4a5a6a"/><ellipse cx="13" cy="11" rx="1.5" ry="0.95" fill="#4a5a6a"/><path d="M6.4 15.6 Q10 18.4 13.6 15.6 Q10 16.6 6.4 15.6 Z" fill="#e8e8e8" stroke="#6a4a3a" stroke-width="0.5"/></svg>
<div class="a " style="left:1115.80px;top:743.99px;font-size:16.6px;line-height:19.92px;color:#172B4D;font-weight:400;">Leo Díaz Murillo</div>
<div class="loz" style="top:743.80px;width:58px;background:#E3FCEF;color:#216E4E;">DONE<svg width="10" height="7" viewBox="0 0 10 7" style="margin-left:3.5px;vertical-align:0px"><path d="M1.5 1.5 L5 5 L8.5 1.5" fill="none" stroke="currentColor" stroke-width="2" stroke-linecap="round" stroke-linejoin="round"/></svg></div>
<svg class="a" style="left:327.10px;top:833.90px;" width="16" height="16" viewBox="0 0 16 16"><rect width="16" height="16" rx="2.2" fill="#A2A9B7"/><circle cx="8" cy="8" r="3.6" fill="none" stroke="#fff" stroke-width="1.6"/></svg>
<div class="a " style="left:434.30px;top:834.37px;font-size:14.3px;line-height:17.16px;color:#66738A;font-weight:700;">SEG-10</div>
<div class="sum" style="top:807.50px;">Instructions for deleting this sample board and project are in the<br>description for this issue &gt;&gt; Click the "SEG-10" link and read the<br>description tab of the detail view for more</div>
<svg class="a" style="left:1080.20px;top:830.70px;" width="19.0" height="23.75" viewBox="0 0 20 25"><path d="M1.8 23 Q10 20 18.2 23 Q17 25 10 25 Q3 25 1.8 23 Z" fill="#3b1216"/><path d="M8.2 19.5 L11.8 19.5 L11.8 22.8 Q10 23.6 8.2 22.8 Z" fill="#f1bf98"/><ellipse cx="1.9" cy="12" rx="1.7" ry="2.7" fill="#d9a27e" stroke="#5a3b2e" stroke-width="0.5"/><ellipse cx="18.1" cy="12" rx="1.7" ry="2.7" fill="#d9a27e" stroke="#5a3b2e" stroke-width="0.5"/><path d="M2.4 9.5 Q2.4 0.8 10 0.8 Q17.6 0.8 17.6 9.5 L17 14.5 Q15.4 21.4 10 21.4 Q4.6 21.4 3 14.5 Z" fill="#F4BF96" stroke="#3a2a2a" stroke-width="0.9"/><path d="M3.5 5.5 Q5 0.8 10 0.8 Q15 0.8 16.5 5.5 Q14.5 2.4 10 2.2 Q5.5 2.4 3.5 5.5 Z" fill="#3a3036"/><path d="M5.2 8.8 L8.4 8.5 M11.6 8.5 L14.8 8.8" stroke="#6a4a3a" stroke-width="1"/><ellipse cx="7" cy="11" rx="1.5" ry="0.95" fill="#4a5a6a"/><ellipse cx="13" cy="11" rx="1.5" ry="0.95" fill="#4a5a6a"/><path d="M6.4 15.6 Q10 18.4 13.6 15.6 Q10 16.6 6.4 15.6 Z" fill="#e8e8e8" stroke="#6a4a3a" stroke-width="0.5"/></svg>
<div class="a " style="left:1115.80px;top:832.99px;font-size:16.6px;line-height:19.92px;color:#172B4D;font-weight:400;">Leo Díaz Murillo</div>
<div class="loz" style="top:832.80px;width:58px;background:#E3FCEF;color:#216E4E;">DONE<svg width="10" height="7" viewBox="0 0 10 7" style="margin-left:3.5px;vertical-align:0px"><path d="M1.5 1.5 L5 5 L8.5 1.5" fill="none" stroke="currentColor" stroke-width="2" stroke-linecap="round" stroke-linejoin="round"/></svg></div>
<svg class="a" style="left:327.10px;top:911.20px;" width="16" height="16" viewBox="0 0 16 16"><rect width="16" height="16" rx="2.2" fill="#D8553F"/><circle cx="8" cy="8" r="3.6" fill="#fff"/></svg>
<div class="a " style="left:434.30px;top:911.67px;font-size:14.3px;line-height:17.16px;color:#66738A;font-weight:700;">SEG-6</div>
<div class="sum" style="top:896.50px;">Work In Progress (WIP) limits highlight delays. This column's limit is<br>1...</div>
<svg class="a" style="left:1080.20px;top:908.00px;" width="19.0" height="23.75" viewBox="0 0 20 25"><path d="M1.8 23 Q10 20 18.2 23 Q17 25 10 25 Q3 25 1.8 23 Z" fill="#3b1216"/><path d="M8.2 19.5 L11.8 19.5 L11.8 22.8 Q10 23.6 8.2 22.8 Z" fill="#f1bf98"/><ellipse cx="1.9" cy="12" rx="1.7" ry="2.7" fill="#d9a27e" stroke="#5a3b2e" stroke-width="0.5"/><ellipse cx="18.1" cy="12" rx="1.7" ry="2.7" fill="#d9a27e" stroke="#5a3b2e" stroke-width="0.5"/><path d="M2.4 9.5 Q2.4 0.8 10 0.8 Q17.6 0.8 17.6 9.5 L17 14.5 Q15.4 21.4 10 21.4 Q4.6 21.4 3 14.5 Z" fill="#F4BF96" stroke="#3a2a2a" stroke-width="0.9"/><path d="M3.5 5.5 Q5 0.8 10 0.8 Q15 0.8 16.5 5.5 Q14.5 2.4 10 2.2 Q5.5 2.4 3.5 5.5 Z" fill="#3a3036"/><path d="M5.2 8.8 L8.4 8.5 M11.6 8.5 L14.8 8.8" stroke="#6a4a3a" stroke-width="1"/><ellipse cx="7" cy="11" rx="1.5" ry="0.95" fill="#4a5a6a"/><ellipse cx="13" cy="11" rx="1.5" ry="0.95" fill="#4a5a6a"/><path d="M6.4 15.6 Q10 18.4 13.6 15.6 Q10 16.6 6.4 15.6 Z" fill="#e8e8e8" stroke="#6a4a3a" stroke-width="0.5"/></svg>
<div class="a " style="left:1115.80px;top:910.29px;font-size:16.6px;line-height:19.92px;color:#172B4D;font-weight:400;">Leo Díaz Murillo</div>
<div class="loz" style="top:910.10px;width:101px;background:#DEEBFF;color:#0747A6;border-radius:3px 0 0 3px;">IN PROGRESS<svg width="10" height="7" viewBox="0 0 10 7" style="margin-left:3.5px;vertical-align:0px"><path d="M1.5 1.5 L5 5 L8.5 1.5" fill="none" stroke="currentColor" stroke-width="2" stroke-linecap="round" stroke-linejoin="round"/></svg></div>
<svg class="a" style="left:327.10px;top:976.80px;" width="16" height="16" viewBox="0 0 16 16"><rect width="16" height="16" rx="2.2" fill="#D8553F"/><circle cx="8" cy="8" r="3.6" fill="#fff"/></svg>
<div class="a " style="left:434.30px;top:977.27px;font-size:14.3px;line-height:17.16px;color:#66738A;font-weight:700;">SEG-5</div>
<div class="sum" style="top:962.10px;">Work items flow through different stages from left to right &gt;&gt; Try<br>dragging this card to "Selected for Development"</div>
<svg class="a" style="left:1080.20px;top:973.60px;" width="19.0" height="23.75" viewBox="0 0 20 25"><path d="M1.8 23 Q10 20 18.2 23 Q17 25 10 25 Q3 25 1.8 23 Z" fill="#3b1216"/><path d="M8.2 19.5 L11.8 19.5 L11.8 22.8 Q10 23.6 8.2 22.8 Z" fill="#f1bf98"/><ellipse cx="1.9" cy="12" rx="1.7" ry="2.7" fill="#d9a27e" stroke="#5a3b2e" stroke-width="0.5"/><ellipse cx="18.1" cy="12" rx="1.7" ry="2.7" fill="#d9a27e" stroke="#5a3b2e" stroke-width="0.5"/><path d="M2.4 9.5 Q2.4 0.8 10 0.8 Q17.6 0.8 17.6 9.5 L17 14.5 Q15.4 21.4 10 21.4 Q4.6 21.4 3 14.5 Z" fill="#F4BF96" stroke="#3a2a2a" stroke-width="0.9"/><path d="M3.5 5.5 Q5 0.8 10 0.8 Q15 0.8 16.5 5.5 Q14.5 2.4 10 2.2 Q5.5 2.4 3.5 5.5 Z" fill="#3a3036"/><path d="M5.2 8.8 L8.4 8.5 M11.6 8.5 L14.8 8.8" stroke="#6a4a3a" stroke-width="1"/><ellipse cx="7" cy="11" rx="1.5" ry="0.95" fill="#4a5a6a"/><ellipse cx="13" cy="11" rx="1.5" ry="0.95" fill="#4a5a6a"/><path d="M6.4 15.6 Q10 18.4 13.6 15.6 Q10 16.6 6.4 15.6 Z" fill="#e8e8e8" stroke="#6a4a3a" stroke-width="0.5"/></svg>
<div class="a " style="left:1115.80px;top:975.89px;font-size:16.6px;line-height:19.92px;color:#172B4D;font-weight:400;">Leo Díaz Murillo</div>
<div class="loz" style="top:975.70px;width:84px;background:#DFE1E6;color:#42526E;">BACKLOG<svg width="10" height="7" viewBox="0 0 10 7" style="margin-left:3.5px;vertical-align:0px"><path d="M1.5 1.5 L5 5 L8.5 1.5" fill="none" stroke="currentColor" stroke-width="2" stroke-linecap="round" stroke-linejoin="round"/></svg></div>
<div class="a" style="left:1418.60px;top:0.00px;width:1.40px;height:1018.00px;background:#2a2a2e;"></div>
<svg class="a" style="left:0.00px;top:1010.00px;" width="12" height="8" viewBox="0 0 12 8"><path d="M0 1 Q1.5 7.5 11 8 L0 8 Z" fill="#000"/></svg>
<svg class="a" style="left:1404.00px;top:1006.00px;" width="16" height="12" viewBox="0 0 16 12"><path d="M16 0 Q14.5 11 1 12 L16 12 Z" fill="#1a1a1c"/></svg>
</body></html>
